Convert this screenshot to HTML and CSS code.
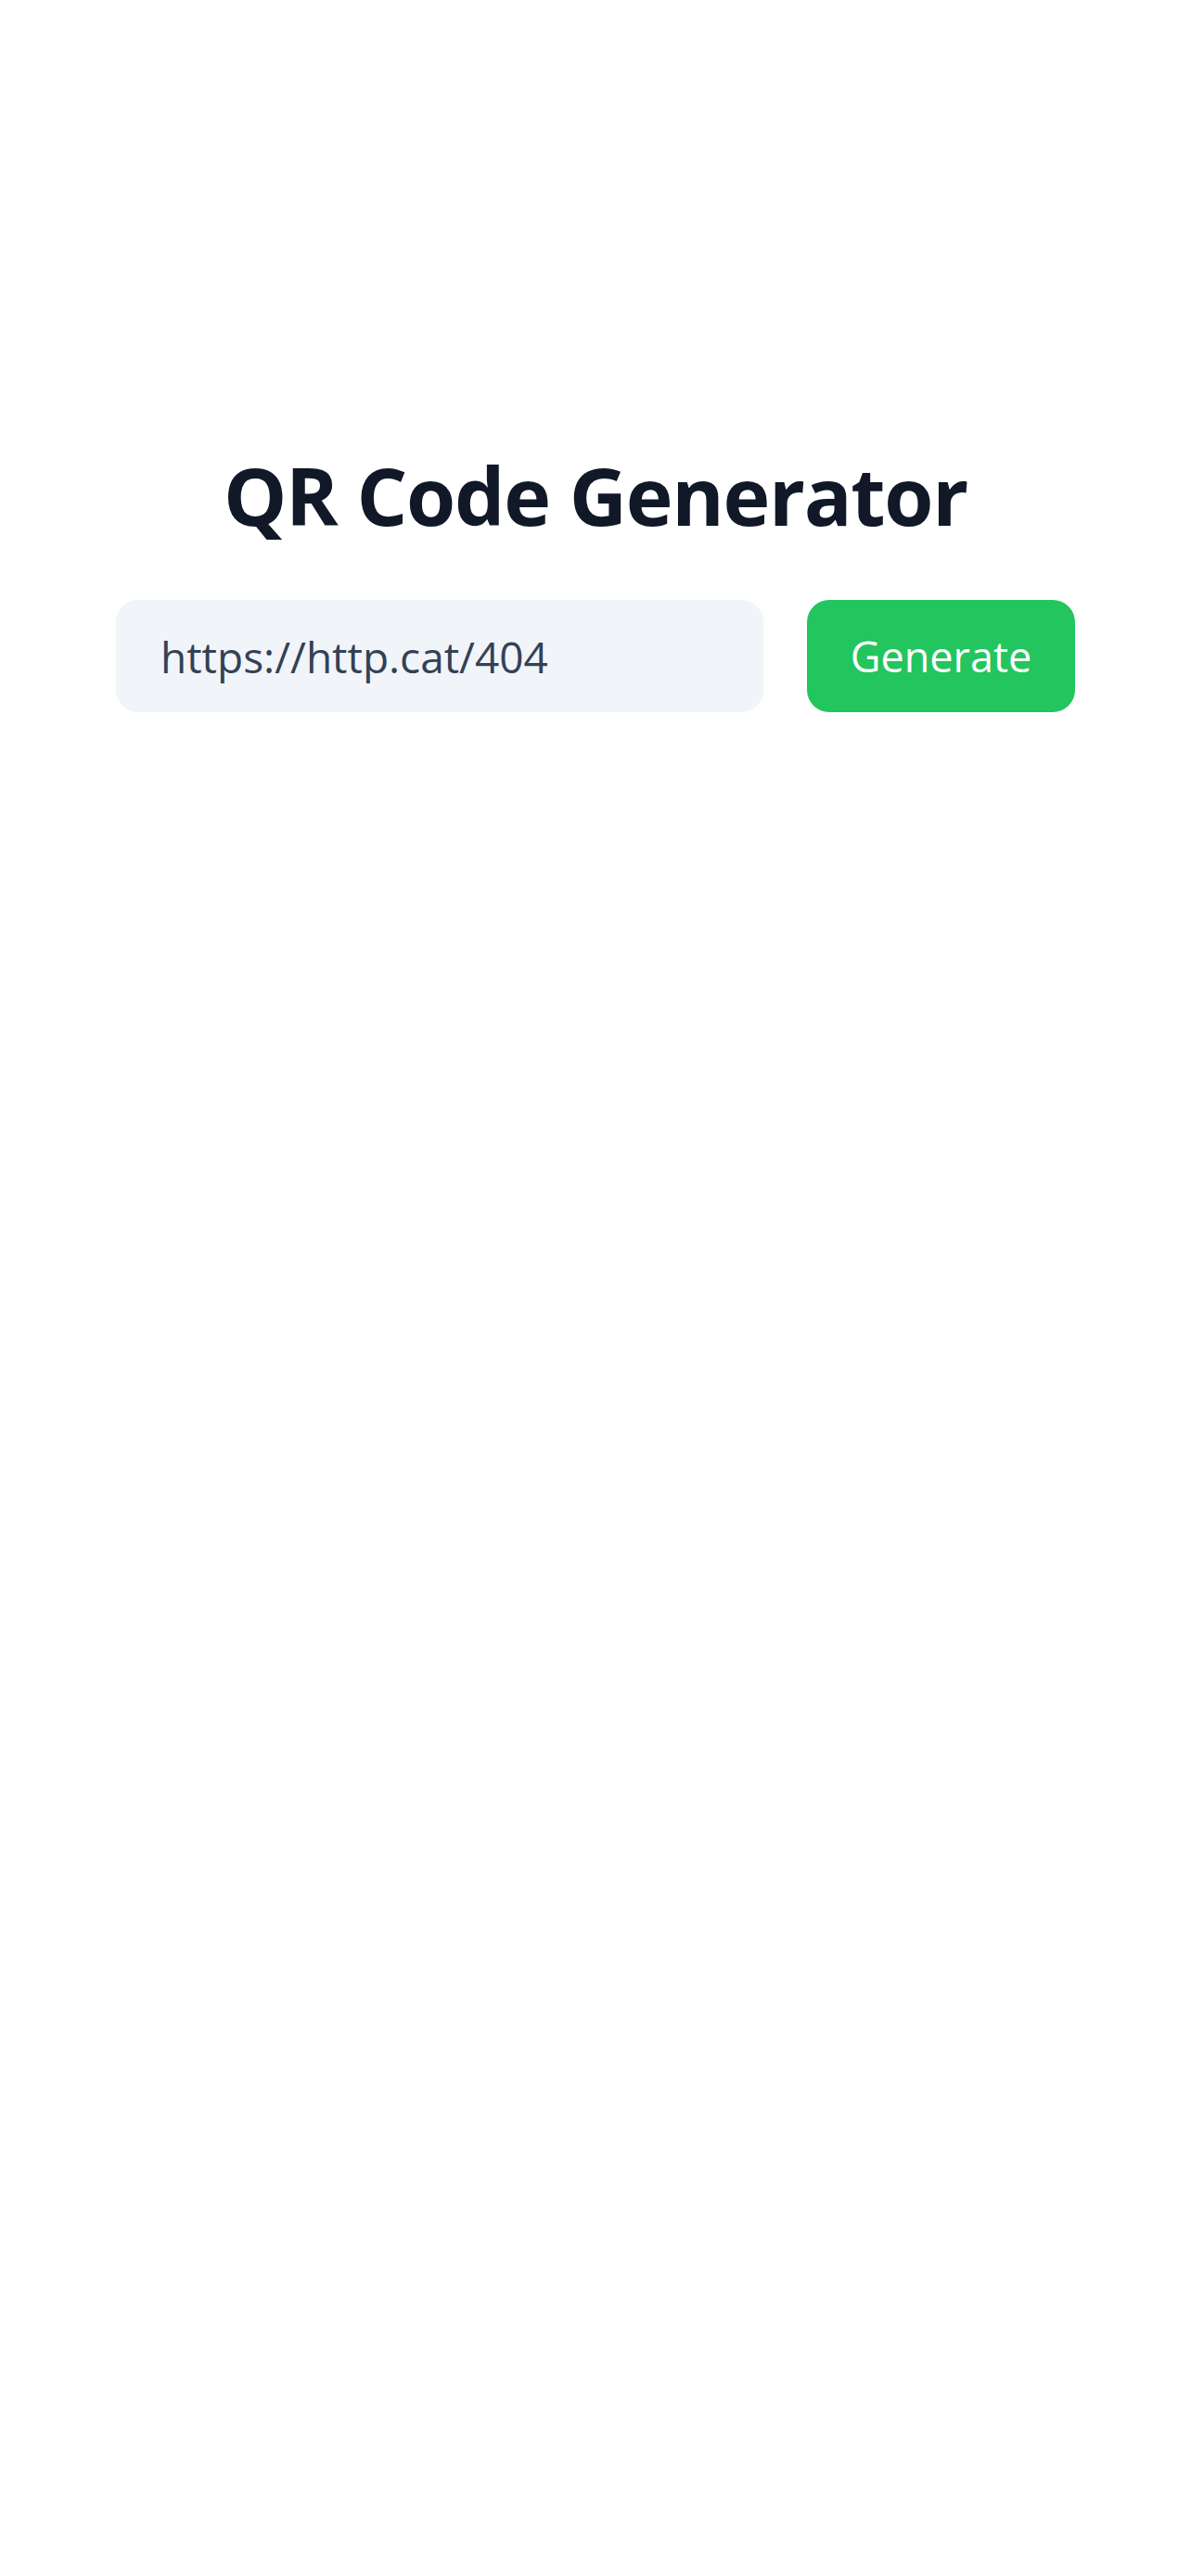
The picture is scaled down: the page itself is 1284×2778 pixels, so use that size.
FILE: index.html
```html
<!DOCTYPE html>
<html lang="en">
<head>
<meta charset="utf-8">
<title>QR Code Generator</title>
<link rel="stylesheet" href="styles.css">
</head>
<body>
<main class="page">
  <h1 class="title">QR Code Generator</h1>
  <form class="row">
    <input class="url" type="text" value="https://http.cat/404">
    <button class="btn" type="button">Generate</button>
  </form>
</main>
</body>
</html>
```

FILE: styles.css
```css
html, body {
  margin: 0;
  padding: 0;
  background: #ffffff;
}
body {
  font-family: "Open Sans", "Noto Sans", "Liberation Sans", sans-serif;
}
.page {
  display: flex;
  flex-direction: column;
  align-items: center;
  padding-top: 480px;
}
.title {
  margin: 0 0 59px;
  font-size: 86px;
  line-height: 108px;
  font-weight: 700;
  color: #111827;
  letter-spacing: -1.3px;
}
.row {
  display: flex;
  gap: 47px;
  width: 1034px;
  margin: 0;
}
.url {
  flex: 1 1 auto;
  min-width: 0;
  height: 121px;
  box-sizing: border-box;
  border: none;
  outline: none;
  border-radius: 24px;
  background: #f1f4f8;
  padding: 0 48px;
  font-family: inherit;
  font-size: 46px;
  color: #334155;
}
.btn {
  flex: 0 0 289px;
  height: 121px;
  border: none;
  border-radius: 24px;
  background: #22c55e;
  color: #ffffff;
  font-family: inherit;
  font-size: 45px;
  padding: 0;
}
```
